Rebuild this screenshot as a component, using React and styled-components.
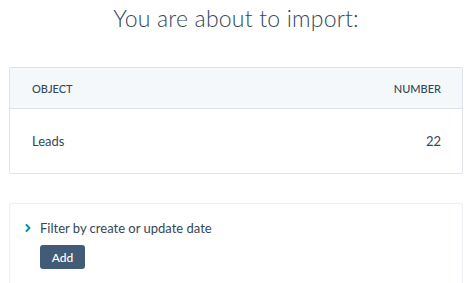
import React from 'react'
import styled, { createGlobalStyle } from 'styled-components'

const Global = createGlobalStyle`
  html, body {
    margin: 0;
    padding: 0;
    background: #fff;
  }
  body {
    font-family: Lato, "Noto Sans", sans-serif;
    color: #33475b;
  }
`

const Page = styled.div`
  width: 474px;
  height: 283px;
  overflow: hidden;
  padding: 0 11px 0 9px;
  box-sizing: border-box;
`

const Title = styled.h1`
  margin: 0;
  padding-top: 4px;
  height: 63px;
  text-align: center;
  font-size: 23px;
  font-weight: 300;
  letter-spacing: 0.2px;
  color: #33475b;
`

const Table = styled.div`
  border: 1px solid #dfe3eb;
  border-radius: 2px;
`

const Row = styled.div`
  display: flex;
  justify-content: space-between;
  align-items: center;
  padding: 0 21px 0 22px;
  height: ${(p) => (p.$head ? '40px' : '64px')};
  background: ${(p) => (p.$head ? '#f5f8fa' : '#fff')};
  border-bottom: ${(p) => (p.$head ? '1px solid #dfe3eb' : 'none')};
  font-size: ${(p) => (p.$head ? '11px' : '13px')};
  font-weight: ${(p) => (p.$head ? 500 : 400)};
`

const Card = styled.div`
  margin-top: 29px;
  border: 1px solid #eaf0f6;
  border-bottom: none;
  border-radius: 3px 3px 0 0;
  padding: 16px 14px 30px;
`

const Toggle = styled.div`
  display: flex;
  align-items: center;
  gap: 8px;
  font-size: 13px;
  color: #33475b;
`

const Chevron = styled.svg`
  width: 8px;
  height: 8px;
`

const Button = styled.button`
  margin: 9px 0 0 16px;
  width: 45px;
  height: 24px;
  border: none;
  border-radius: 3px;
  background: #425b76;
  color: #fff;
  font-family: inherit;
  font-size: 12px;
  font-weight: 500;
  cursor: pointer;
`

export default function App() {
  return (
    <>
      <Global />
      <Page>
        <Title>You are about to import:</Title>
        <Table>
          <Row $head>
            <span>OBJECT</span>
            <span>NUMBER</span>
          </Row>
          <Row>
            <span>Leads</span>
            <span>22</span>
          </Row>
        </Table>
        <Card>
          <Toggle>
            <Chevron viewBox="0 0 8 8">
              <path d="M2.5 1 L5.5 4 L2.5 7" fill="none" stroke="#0091ae" strokeWidth="1.9" strokeLinecap="round" strokeLinejoin="round" />
            </Chevron>
            <span>Filter by create or update date</span>
          </Toggle>
          <Button>Add</Button>
        </Card>
      </Page>
    </>
  )
}
